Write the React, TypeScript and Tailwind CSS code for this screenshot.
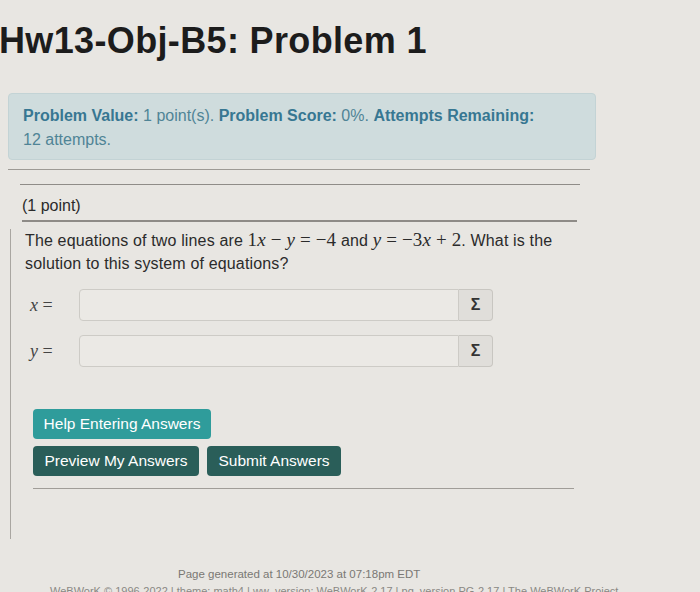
export default function App() {
  const rows = [
    { v: "x", top: "mt-[14px]" },
    { v: "y", top: "mt-[14px]" },
  ]

  return (
    <div className="min-h-[592px] h-[592px] overflow-hidden bg-[#e8e6e2] text-[#2b2b2b] font-['Liberation_Sans',Arial,sans-serif]">
      {/* titre */}
      <h1 className="mt-[21px] -ml-[1px] text-[36px] leading-[40px] font-bold tracking-[0.35px] text-[#1c1c1c]">
        Hw13-Obj-B5: Problem 1
      </h1>

      {/* bilgi kutusu */}
      <div className="mt-[32px] ml-[8px] w-[588px] rounded-[4px] border border-[#c3d3d5] bg-[#cfdcdd] px-[14px] pt-[10px] pb-[7px] text-[16px] leading-[24px] text-[#4f8496]">
        <span className="font-bold text-[#377792]">Problem Value:</span> 1 point(s).{" "}
        <span className="font-bold text-[#377792]">Problem Score:</span> 0%.{" "}
        <span className="font-bold text-[#377792]">Attempts Remaining:</span>
        <br />
        12 attempts.
      </div>

      <div className="mt-[9px] ml-[8px] w-[582px] border-t border-[#9d9a95]" />
      <div className="mt-[14px] ml-[20px] w-[560px] border-t border-[#8f8c88]" />

      {/* soru */}
      <div className="mt-[11px] ml-[22px] text-[16px] leading-[20px]">(1 point)</div>
      <div className="mt-[4px] ml-[22px] w-[555px] border-t-2 border-[#8e8b87]" />

      <div className="ml-[10px] border-l border-[#a9a6a1] pb-[50px]">
        <p className="mt-[7px] ml-[14px] w-[560px] text-[16px] leading-[23px] tracking-[0.15px]">
          The equations of two lines are{" "}
          <span className="font-['Liberation_Serif',serif] text-[19px] leading-[20px]">
            1<i>x</i> − <i>y</i> = −4
          </span>{" "}
          and{" "}
          <span className="font-['Liberation_Serif',serif] text-[19px] leading-[20px]">
            <i>y</i> = −3<i>x</i> + 2
          </span>
          . What is the solution to this system of equations?
        </p>

        {rows.map((r) => (
          <div key={r.v} className={`${r.top} flex items-center`}>
            <span className="ml-[19px] w-[49px] font-['Liberation_Serif',serif] text-[18px] text-[#444]">
              <i>{r.v}</i> =
            </span>
            <div className="flex h-[32px] w-[414px]">
              <div className="flex-1 rounded-l-[4px] border border-[#cdcbc6] bg-[#ebe9e5]" />
              <div className="flex w-[34px] items-center justify-center rounded-r-[4px] border border-l-0 border-[#c8c6c1] bg-[#e0deda] text-[16px] font-bold text-[#333]">
                Σ
              </div>
            </div>
          </div>
        ))}

        {/* butonlar */}
        <div className="mt-[42px] ml-[22px] flex flex-col items-start gap-[7px] text-[15.5px] text-white">
          <button className="h-[30px] w-[178px] rounded-[4px] bg-[#2f9c9b]">Help Entering Answers</button>
          <div className="flex gap-[8px]">
            <button className="h-[30px] w-[166px] rounded-[4px] bg-[#2a5e59]">Preview My Answers</button>
            <button className="h-[30px] w-[134px] rounded-[4px] bg-[#2a5e59]">Submit Answers</button>
          </div>
        </div>

        <div className="mt-[12px] ml-[22px] w-[541px] border-t border-[#a09d98]" />
      </div>

      {/* footer */}
      <div className="mt-[28px] ml-[178px] text-[11.5px] leading-[14px] text-[#7a7874]">
        Page generated at 10/30/2023 at 07:18pm EDT
      </div>
      <div className="mt-[3px] ml-[50px] whitespace-nowrap text-[11px] leading-[14px] text-[#8a8884]">
        WeBWorK © 1996-2022 | theme: math4 | ww_version: WeBWorK-2.17 | pg_version PG-2.17 | The WeBWorK Project
      </div>
    </div>
  )
}
